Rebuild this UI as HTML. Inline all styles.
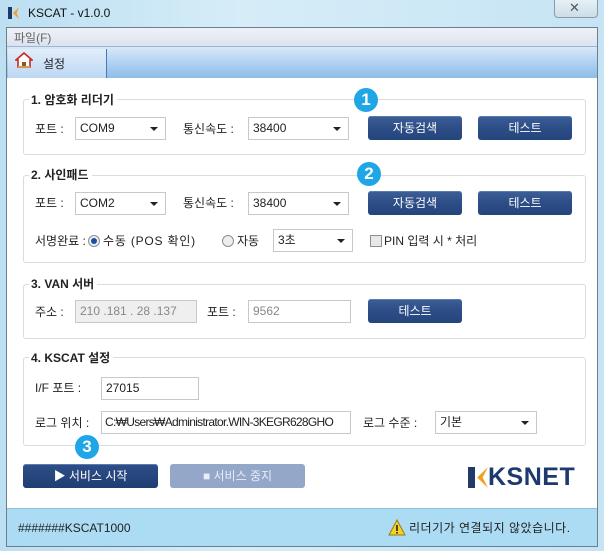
<!DOCTYPE html>
<html><head><meta charset="utf-8"><style>
*{margin:0;padding:0;box-sizing:border-box}
body{width:604px;height:551px;overflow:hidden;position:relative;font-family:"Liberation Sans","Noto Sans CJK KR","NanumGothic",sans-serif;font-size:12px;color:#222;background:linear-gradient(90deg,#bcdff2,#d6edf8 40%,#c6e4f4);}
.a{position:absolute}
.t{position:absolute;white-space:nowrap;line-height:14px}
.grp{position:absolute;border:1px solid #d8dde3;border-radius:3px}
.gt{position:absolute;background:#fff;padding:0 3px 0 2px;font-weight:bold;font-size:12px;line-height:14px;white-space:nowrap}
.sel,.inp{position:absolute;border:1px solid #c5c9cf;background:#fff;font-size:12px;line-height:20px;padding-left:4px;white-space:nowrap;overflow:hidden}
.sel:after{content:"";position:absolute;right:7px;top:9px;border-left:4px solid transparent;border-right:4px solid transparent;border-top:4px solid #222}
.btn{position:absolute;border-radius:3px;background:linear-gradient(#3d5f98,#2c4d86 50%,#24457c);color:#fff;text-align:center;font-size:12px;line-height:24px;box-shadow:inset 0 1px 0 #5a7cb3}
.badge{position:absolute;width:24px;height:24px;border-radius:12px;background:#1ea6e6;color:#fff;font-weight:bold;font-size:17px;line-height:24px;text-align:center}
.rad{position:absolute;width:12px;height:12px;border-radius:6px;border:1px solid #8a8f96;background:#eee}
</style></head><body>
<div class="a" style="left:8px;top:7px;width:4px;height:12px;background:#203a6a"></div>
<div class="a" style="left:13px;top:7px;width:6px;height:12px;background:#f0a020;clip-path:polygon(100% 0,0 50%,100% 100%,60% 50%)"></div>
<div class="t" style="left:28px;top:6px;font-size:12px;color:#111">KSCAT - v1.0.0</div>
<div class="a" style="left:554px;top:0;width:44px;height:18px;border:1px solid #8a9aa8;border-top:none;border-radius:0 0 4px 4px;background:linear-gradient(#e6f0f6,#cbdde8)"><div class="t" style="left:14px;top:1px;color:#555;font-size:13px">✕</div></div>
<div class="a" style="left:6px;top:27px;width:592px;height:520px;border:1px solid #6d7f8f;background:#fff"></div>
<div class="a" style="left:7px;top:28px;width:590px;height:18px;background:linear-gradient(#eef1f8,#dde3ee)"></div>
<div class="t" style="left:14px;top:31px;color:#666">파일(F)</div>
<div class="a" style="left:7px;top:46px;width:590px;height:32px;background:linear-gradient(#d9e9f9,#a9cdf0 60%,#8fbde8);border-top:1px solid #9ab8d8"></div>
<div class="a" style="left:8px;top:49px;width:99px;height:29px;background:linear-gradient(#e2eefb,#bcd7f3);border-right:1px solid #4a79b0"></div>
<svg class="a" style="left:15px;top:52px" width="18" height="16" viewBox="0 0 18 16"><path d="M9 1 L1 8 L3 8 L3 15 L15 15 L15 8 L17 8 Z" fill="#fff" stroke="#c8281e" stroke-width="1.6"/><rect x="7" y="10" width="4" height="5" fill="#8a5a20"/><rect x="3" y="14" width="12" height="1.5" fill="#d9a040"/></svg>
<div class="t" style="left:43px;top:57px;font-size:12px">설정</div>
<div class="a" style="left:7px;top:508px;width:590px;height:38px;background:#acdcf4;border-top:1px solid #8cc2e0"></div>
<div class="t" style="left:18px;top:521px">#######KSCAT1000</div>
<svg class="a" style="left:388px;top:519px" width="18" height="17" viewBox="0 0 18 17"><path d="M9 1 L17 16 L1 16 Z" fill="#f6d12a" stroke="#9a7a10"/><rect x="8.2" y="6" width="1.6" height="6" fill="#222"/><rect x="8.2" y="13" width="1.6" height="1.6" fill="#222"/></svg>
<div class="t" style="left:409px;top:521px;letter-spacing:0.5px">리더기가 연결되지 않았습니다.</div>

<div class="grp" style="left:23px;top:99px;width:563px;height:56px"></div>
<div class="gt" style="left:29px;top:93px">1. 암호화 리더기</div>
<div class="t" style="left:35px;top:122px">포트 :</div>
<div class="sel" style="left:75px;top:117px;width:91px;height:23px">COM9</div>
<div class="t" style="left:183px;top:122px">통신속도 :</div>
<div class="sel" style="left:248px;top:117px;width:101px;height:23px">38400</div>
<div class="btn" style="left:368px;top:116px;width:94px;height:24px">자동검색</div>
<div class="btn" style="left:478px;top:116px;width:94px;height:24px">테스트</div>
<div class="badge" style="left:354px;top:88px">1</div>

<div class="grp" style="left:23px;top:175px;width:563px;height:88px"></div>
<div class="gt" style="left:29px;top:168px">2. 사인패드</div>
<div class="t" style="left:35px;top:196px">포트 :</div>
<div class="sel" style="left:75px;top:192px;width:91px;height:23px">COM2</div>
<div class="t" style="left:183px;top:196px">통신속도 :</div>
<div class="sel" style="left:248px;top:192px;width:101px;height:23px">38400</div>
<div class="btn" style="left:368px;top:191px;width:94px;height:24px">자동검색</div>
<div class="btn" style="left:478px;top:191px;width:94px;height:24px">테스트</div>
<div class="badge" style="left:357px;top:162px">2</div>
<div class="t" style="left:35px;top:234px">서명완료 :</div>
<div class="rad" style="left:88px;top:235px"><div class="a" style="left:2px;top:2px;width:6px;height:6px;border-radius:3px;background:#1a4fa0"></div></div>
<div class="t" style="left:103px;top:234px;letter-spacing:0.8px">수동 (POS 확인)</div>
<div class="rad" style="left:222px;top:235px"></div>
<div class="t" style="left:237px;top:234px">자동</div>
<div class="sel" style="left:273px;top:229px;width:80px;height:23px">3초</div>
<div class="a" style="left:370px;top:235px;width:12px;height:12px;border:1px solid #8a8f96;background:#e8e8e8"></div>
<div class="t" style="left:384px;top:234px">PIN 입력 시 * 처리</div>

<div class="grp" style="left:23px;top:284px;width:563px;height:55px"></div>
<div class="gt" style="left:29px;top:277px">3. VAN 서버</div>
<div class="t" style="left:35px;top:305px">주소 :</div>
<div class="inp" style="left:75px;top:300px;width:122px;height:23px;background:#efefef;color:#888">210 .181 . 28 .137</div>
<div class="t" style="left:207px;top:305px">포트 :</div>
<div class="inp" style="left:248px;top:300px;width:103px;height:23px;color:#888">9562</div>
<div class="btn" style="left:368px;top:299px;width:94px;height:24px">테스트</div>

<div class="grp" style="left:23px;top:357px;width:563px;height:89px"></div>
<div class="gt" style="left:29px;top:351px">4. KSCAT 설정</div>
<div class="t" style="left:35px;top:381px">I/F 포트 :</div>
<div class="inp" style="left:101px;top:377px;width:98px;height:23px">27015</div>
<div class="t" style="left:35px;top:416px">로그 위치 :</div>
<div class="inp" style="left:101px;top:411px;width:250px;height:23px;padding-left:3px;letter-spacing:-0.7px">C:₩Users₩Administrator.WIN-3KEGR628GHO</div>
<div class="t" style="left:363px;top:416px">로그 수준 :</div>
<div class="sel" style="left:435px;top:411px;width:102px;height:23px">기본</div>
<div class="badge" style="left:75px;top:435px">3</div>

<div class="btn" style="left:23px;top:464px;width:135px;height:24px;background:linear-gradient(#2e4f88,#1e3d72)">▶ 서비스 시작</div>
<div class="btn" style="left:170px;top:464px;width:135px;height:24px;background:#94a7c9;box-shadow:none;color:#e8eef8">■ 서비스 중지</div>
<div class="a" style="left:468px;top:467px;width:7px;height:21px;background:#203a6a"></div>
<div class="a" style="left:476px;top:467px;width:12px;height:21px;background:#f0a020;clip-path:polygon(100% 0,10% 50%,100% 100%,55% 50%)"></div>
<div class="t" style="left:488px;top:464px;font-size:25px;line-height:26px;font-weight:bold;color:#1c3a6e;letter-spacing:0.5px">KSNET</div>
</body></html>
